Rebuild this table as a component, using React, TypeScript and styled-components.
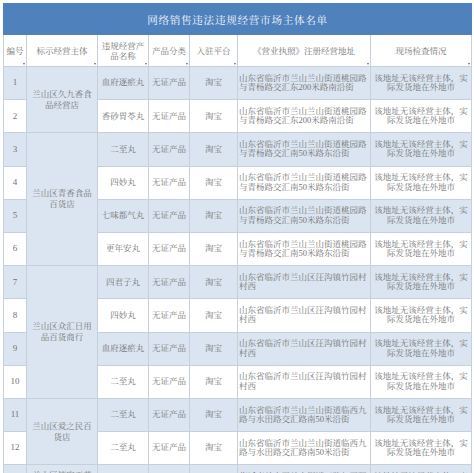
import styled, { createGlobalStyle } from 'styled-components';

const GlobalStyle = createGlobalStyle`
	body {
		margin: 0;
		background: #ffffff;
		font-family: "Liberation Serif", "Noto Serif CJK SC", "Noto Sans CJK SC", serif;
	}
`

const Page = styled.div`
	padding: 3px 3px 0 3px;
	width: 468px;
`

const Sheet = styled.table`
	width: 468px;
	table-layout: fixed;
	border-collapse: collapse;
	color: #747474;
	font-size: 8.5px;
`

const TitleCell = styled.th`
	height: 30px;
	padding: 0;
	background-color: #4f81bd;
	color: #f4f7fb;
	font-size: 10.6px;
	font-weight: 400;
	letter-spacing: 0.7px;
	text-align: center;
	border: 1px solid #4f81bd;
`

const HeadCell = styled.th`
	position: relative;
	height: 31px;
	padding: 0 2px;
	background-color: #ffffff;
	font-weight: 400;
	line-height: 10px;
	text-align: center;
	border: 1px solid #c6d0dc;
`

const FilterMark = styled.span`
	position: absolute;
	right: 1px;
	bottom: 1px;
	width: 0;
	height: 0;
	border-left: 1.5px solid transparent;
	border-right: 1.5px solid transparent;
	border-top: 2px solid #666;
`

const Row = styled.tr<{ shaded: boolean }>`
	height: 33.2px;
	background-color: ${props => (props.shaded ? '#dbe5f1' : '#ffffff')};
`

const Cell = styled.td<{ align?: string }>`
	padding: 0 1px;
	line-height: 9.4px;
	text-align: ${props => props.align || 'center'};
	vertical-align: middle;
	border: 1px solid #c6d0dc;
	overflow: hidden;
`

const NumCell = styled(Cell)`
	padding: 0;
	font-size: 9px;
`

const LabelCell = styled.td`
	padding: 0 4px;
	background-color: #dbe5f1;
	line-height: 11px;
	text-align: center;
	vertical-align: middle;
	border: 1px solid #c6d0dc;
	overflow: hidden;
`

interface Entry {
	no: number;
	product: string;
}

interface Shop {
	name: string;
	address: string;
	items: Entry[];
}

const shops: Shop[] = [
	{
		name: '兰山区久九香食品经营店',
		address: '山东省临沂市兰山兰山街道桃园路与青杨路交汇东200米路南沿街',
		items: [
			{ no: 1, product: '血府逐瘀丸' },
			{ no: 2, product: '香砂胃苓丸' },
		],
	},
	{
		name: '兰山区青香食品百货店',
		address: '山东省临沂市兰山兰山街道桃园路与青杨路交汇南50米路东沿街',
		items: [
			{ no: 3, product: '二至丸' },
			{ no: 4, product: '四妙丸' },
			{ no: 5, product: '七味都气丸' },
			{ no: 6, product: '更年安丸' },
		],
	},
	{
		name: '兰山区众汇日用品百货商行',
		address: '山东省临沂市兰山区汪沟镇竹园村村西',
		items: [
			{ no: 7, product: '四君子丸' },
			{ no: 8, product: '四妙丸' },
			{ no: 9, product: '血府逐瘀丸' },
			{ no: 10, product: '二至丸' },
		],
	},
	{
		name: '兰山区爱之民百货店',
		address: '山东省临沂市兰山兰山街道临西九路与水田路交汇路南50米沿街',
		items: [
			{ no: 11, product: '二至丸' },
			{ no: 12, product: '二至丸' },
		],
	},
	{
		name: '兰山区捷宏工艺品经营部',
		address: '临沂市兰山区兰山街道三路与开阳路南段沿街',
		items: [{ no: 13, product: '二至丸' }],
	},
]

const headers = ['编号', '标示经营主体', '违规经营产品名称', '产品分类', '入驻平台', '《营业执照》注册经营地址', '现场检查情况']
const widths = [23, 71, 51, 41, 48, 133, 101]

function App() {
	return (
		<Page>
			<GlobalStyle />
			<Sheet>
				<colgroup>
					{widths.map((w, i) => <col key={i} style={{ width: w }} />)}
				</colgroup>
				<thead>
					<tr>
						<TitleCell colSpan={7}>网络销售违法违规经营市场主体名单</TitleCell>
					</tr>
					<tr>
						{headers.map(h => (
							<HeadCell key={h}>
								{h}
								<FilterMark />
							</HeadCell>
						))}
					</tr>
				</thead>
				<tbody>
					{shops.map(shop =>
						shop.items.map((item, i) => (
							<Row key={item.no} shaded={item.no % 2 === 1}>
								<NumCell>{item.no}</NumCell>
								{i === 0 && <LabelCell rowSpan={shop.items.length}>{shop.name}</LabelCell>}
								<Cell>{item.product}</Cell>
								<Cell>无证产品</Cell>
								<Cell>淘宝</Cell>
								<Cell align="left">{shop.address}</Cell>
								<Cell>该地址无该经营主体，实际发货地在外地市</Cell>
							</Row>
						))
					)}
				</tbody>
			</Sheet>
		</Page>
	)
}

export default App;
